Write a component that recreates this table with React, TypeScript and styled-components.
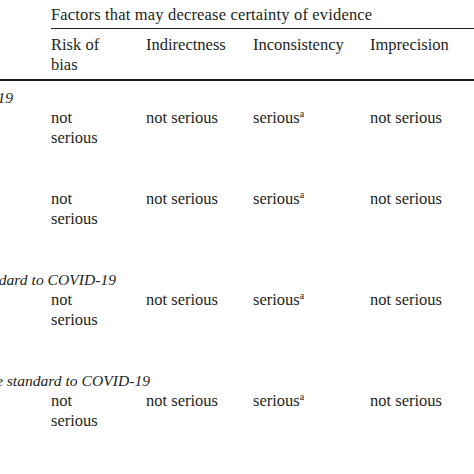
import React from "react";
import styled, { createGlobalStyle } from "styled-components";

const GlobalStyle = createGlobalStyle`
  html, body {
    margin: 0;
    padding: 0;
    background: #ffffff;
    overflow: hidden;
  }
  body {
    font-family: "Liberation Serif", "Times New Roman", serif;
    font-size: 16.5px;
    line-height: 20px;
    color: #231f20;
  }
`;

const Table = styled.div`
  width: 474px;
  display: grid;
  grid-template-columns: 51px 95px 107px 117px 1fr;
`;

const GroupHeader = styled.div`
  grid-column: 2 / -1;
  padding: 5px 0 3px;
  border-bottom: 1px solid #231f20;
  white-space: nowrap;
  letter-spacing: 0.17px;
`;

const HeaderRow = styled.div`
  grid-column: 1 / -1;
  display: grid;
  grid-template-columns: subgrid;
  padding: 6px 0 4px;
  margin-bottom: 7px;
  border-bottom: 2px solid #231f20;
`;

const Cell = styled.div<{ $narrow?: boolean }>`
  padding-right: 8px;
  max-width: ${(p) => (p.$narrow ? "60px" : "none")};
`;

const SectionRow = styled.div`
  grid-column: 1 / -1;
  display: flex;
`;

const SectionTitle = styled.div<{ $end: number }>`
  width: ${(p) => p.$end}px;
  display: flex;
  justify-content: flex-end;
  white-space: nowrap;
  font-style: italic;
  font-size: 15.6px;
`;

const DataRow = styled.div`
  grid-column: 1 / -1;
  display: grid;
  grid-template-columns: subgrid;
  padding-bottom: 41px;
`;

const Note = styled.sup`
  font-size: 10px;
  line-height: 0;
  vertical-align: 6px;
`;

type Row = { section?: { title: string; end: number } };

const rows: Row[] = [
  { section: { title: "Mortality in hospitalised patients with COVID-19", end: 13 } },
  {},
  { section: { title: "Mortality: treatment vs. standard to COVID-19", end: 116 } },
  { section: { title: "Viral clearance: treatment vs. the standard to COVID-19", end: 150 } },
];

const App: React.FC = () => {
  return (
    <>
      <GlobalStyle />
      <Table>
        <GroupHeader>Factors that may decrease certainty of evidence</GroupHeader>
        <HeaderRow>
          <Cell />
          <Cell $narrow>Risk of bias</Cell>
          <Cell>Indirectness</Cell>
          <Cell>Inconsistency</Cell>
          <Cell>Imprecision</Cell>
        </HeaderRow>
        {rows.map((row, i) => (
          <React.Fragment key={i}>
            {row.section && (
              <SectionRow>
                <SectionTitle $end={row.section.end}>{row.section.title}</SectionTitle>
              </SectionRow>
            )}
            <DataRow>
              <Cell />
              <Cell $narrow>not serious</Cell>
              <Cell>not serious</Cell>
              <Cell>
                serious<Note>a</Note>
              </Cell>
              <Cell>not serious</Cell>
            </DataRow>
          </React.Fragment>
        ))}
      </Table>
    </>
  );
};

export default App;
